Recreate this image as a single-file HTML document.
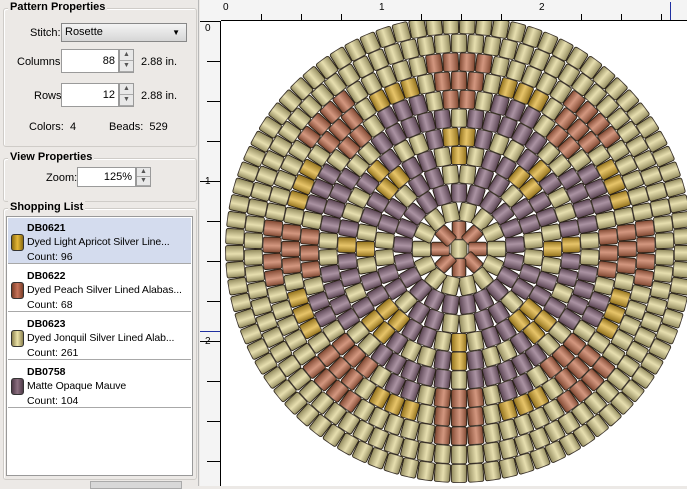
<!DOCTYPE html>
<html><head><style>
body{margin:0;width:687px;height:486px;background:#ece9e6;font-family:"Liberation Sans",sans-serif;font-size:11px;color:#000;position:relative;overflow:hidden}
.a{position:absolute}
.gb{position:absolute;border:1px solid #cfccc8;border-radius:3px;box-shadow:inset 1px 1px 0 #fff}
.gt{position:absolute;font-weight:bold;background:#ece9e6;padding:0 2px;font-size:11px}
.inp{position:absolute;background:#fff;border:1px solid #9a9a9a;text-align:right;box-sizing:border-box;padding-right:3px;line-height:22px}
.sp{position:absolute;width:15px;border:1px solid #9a9a9a;box-sizing:border-box;background:#e8e8e8}
.sp div{height:50%;box-sizing:border-box;border-bottom:1px solid #aaa;font-size:7px;text-align:center;color:#555;line-height:10px}
.item{position:absolute;left:8px;width:183px;height:46px;border-bottom:1px solid #a8a8a8;box-sizing:border-box;font-size:10.5px}
.item b{position:absolute;left:19px;top:4px}
.item .n{position:absolute;left:19px;top:18px;white-space:nowrap;letter-spacing:-0.1px}
.item .c{position:absolute;left:19px;top:33px}
.sw{position:absolute;left:3px;top:16px;width:11px;height:15px;border:1px solid #333;border-radius:3px}
</style></head><body>
<div class="gb" style="left:3px;top:8px;width:192px;height:137px"></div>
<div class="gt" style="left:8px;top:1px">Pattern Properties</div>
<div class="a" style="left:30px;top:27px">Stitch:</div>
<div class="a" style="left:61px;top:23px;width:126px;height:19px;border:1px solid #888;box-sizing:border-box;background:linear-gradient(#f4f4f4,#d6d6d6);padding-left:3px;line-height:17px">Rosette<span style="position:absolute;right:6px;top:0;font-size:8px">▼</span></div>
<div class="a" style="left:17px;top:56px">Columns:</div>
<div class="inp" style="left:61px;top:49px;width:58px;height:24px">88</div>
<div class="sp" style="left:119px;top:49px;height:24px"><div>▲</div><div>▼</div></div>
<div class="a" style="left:141px;top:56px">2.88 in.</div>
<div class="a" style="left:34px;top:90px">Rows:</div>
<div class="inp" style="left:61px;top:83px;width:58px;height:24px">12</div>
<div class="sp" style="left:119px;top:83px;height:24px"><div>▲</div><div>▼</div></div>
<div class="a" style="left:141px;top:90px">2.88 in.</div>
<div class="a" style="left:29px;top:121px">Colors:&nbsp; 4</div>
<div class="a" style="left:109px;top:121px">Beads:&nbsp; 529</div>
<div class="gb" style="left:3px;top:158px;width:192px;height:42px"></div>
<div class="gt" style="left:8px;top:151px">View Properties</div>
<div class="a" style="left:46px;top:172px">Zoom:</div>
<div class="inp" style="left:77px;top:167px;width:59px;height:20px;line-height:18px">125%</div>
<div class="sp" style="left:136px;top:167px;height:20px"><div style="line-height:8px">▲</div><div style="line-height:8px">▼</div></div>
<div class="gb" style="left:3px;top:208px;width:192px;height:270px"></div>
<div class="gt" style="left:8px;top:201px">Shopping List</div>
<div class="a" style="left:6px;top:216px;width:187px;height:260px;background:#fff;border:1px solid #999;box-sizing:border-box"></div>
<div class="item" style="top:218px;background:#d4dcee"><div class="sw" style="background:linear-gradient(90deg,#8a6a10,#e6b838,#8a6a10)"></div><b>DB0621</b><div class="n">Dyed Light Apricot Silver Line...</div><div class="c">Count: 96</div></div>
<div class="item" style="top:266px"><div class="sw" style="background:linear-gradient(90deg,#7a3e28,#c8745a,#7a3e28)"></div><b>DB0622</b><div class="n">Dyed Peach Silver Lined Alabas...</div><div class="c">Count: 68</div></div>
<div class="item" style="top:314px"><div class="sw" style="background:linear-gradient(90deg,#8c8250,#ece3a8,#8c8250)"></div><b>DB0623</b><div class="n">Dyed Jonquil Silver Lined Alab...</div><div class="c">Count: 261</div></div>
<div class="item" style="top:362px"><div class="sw" style="background:linear-gradient(90deg,#4e3a48,#8c7080,#4e3a48)"></div><b>DB0758</b><div class="n">Matte Opaque Mauve</div><div class="c">Count: 104</div></div>
<div class="a" style="left:90px;top:481px;width:90px;height:6px;background:#d8d8d8;border:1px solid #aaa"></div>
<div class="a" style="left:198px;top:0;width:1px;height:486px;background:#b8b8b8"></div>
<div class="a" style="left:200px;top:0;width:487px;height:486px;background:#f4f4f4"></div>
<div class="a" style="left:202px;top:3px;width:15px;height:14px;border:1px solid #888;border-radius:3px;background:linear-gradient(#eee,#ccc);text-align:center;line-height:14px">in</div>
<svg class="a" style="left:0;top:0" width="687" height="486">
<rect x="221" y="21" width="466" height="465" fill="#fff"/>
<g id="b"></g>
<rect x="200" y="0" width="487" height="20" fill="#f4f4f4"/>
<line x1="221" y1="20.5" x2="687" y2="20.5" stroke="#000"/>
<line x1="220.5" y1="21" x2="220.5" y2="486" stroke="#000"/>
<g id="tk" stroke="#000"></g>
<line x1="670.5" y1="2" x2="670.5" y2="20" stroke="#2030a0"/>
<line x1="200" y1="331.5" x2="220" y2="331.5" stroke="#2030a0"/>
<g font-size="10" font-family="Liberation Sans"><text x="223" y="10">0</text><text x="379" y="10">1</text><text x="539" y="10">2</text><text x="205" y="31">0</text><text x="205" y="184">1</text><text x="205" y="344">2</text></g>
<defs><linearGradient id="g" x1="0" y1="0" x2="1" y2="0"><stop offset="0" stop-color="#000" stop-opacity=".35"/><stop offset=".45" stop-color="#fff" stop-opacity=".3"/><stop offset="1" stop-color="#000" stop-opacity=".35"/></linearGradient></defs>
</svg>
<script>
var tk=document.getElementById('tk'),s='';
for(var x=221;x<687;x+=40){var L=(x-221)%160==0?20:14;s+='<line x1="'+(x+.5)+'" y1="'+L+'" x2="'+(x+.5)+'" y2="20"/>';}
for(var y=21;y<486;y+=40){var L=(y-21)%160==0?200:207;s+='<line x1="'+L+'" y1="'+(y+.5)+'" x2="220" y2="'+(y+.5)+'"/>';}
tk.innerHTML=s;
var C={j:'#dcd08c',p:'#c06a48',m:'#86647a',g:'#dcaa28'};
function col(k,d){
switch(k){case 0:return'j';case 1:return'p';case 2:return'j';case 3:return'm';
case 4:return d<9?'j':'m';case 5:return d<6?'g':(d<13?'j':'m');case 6:return d<6?'g':(d<15?'m':'j');
case 7:return d<7?'j':'m';case 8:return d<8?'p':(d<15?'j':'m');case 9:return d<9?'p':(d<16?'j':'g');
case 10:return d<10?'p':'j';default:return'j';}}
var cx=459,cy=249,sp=18.7,o='';
o+='<g transform="translate('+cx+','+cy+')"><rect x="-8" y="-9" width="16" height="18" rx="2" fill="'+C.j+'" stroke="#3a3020" stroke-width=".8"/><rect x="-8" y="-9" width="16" height="18" rx="2" fill="url(#g)"/></g>';
for(var k=1;k<=12;k++){var r=k*sp,n=k==1?8:Math.round(2*Math.PI*r/16.5);var w=Math.min(15.5,2*Math.PI*r/n-1);
for(var i=0;i<n;i++){var a=(i+(k%2?0:.5))*360/n;var dd=((a%45)+45)%45;var d=Math.min(dd,45-dd);var c=C[col(k,d)];
o+='<g transform="translate('+cx+','+cy+') rotate('+a+') translate(0,'+(-r)+')"><rect x="'+(-w/2)+'" y="-9" width="'+w+'" height="18" rx="2" fill="'+c+'" stroke="#2e2418" stroke-width=".9"/><rect x="'+(-w/2)+'" y="-9" width="'+w+'" height="18" rx="2" fill="url(#g)"/></g>';}}
document.getElementById('b').innerHTML=o;
</script>
</body></html>
